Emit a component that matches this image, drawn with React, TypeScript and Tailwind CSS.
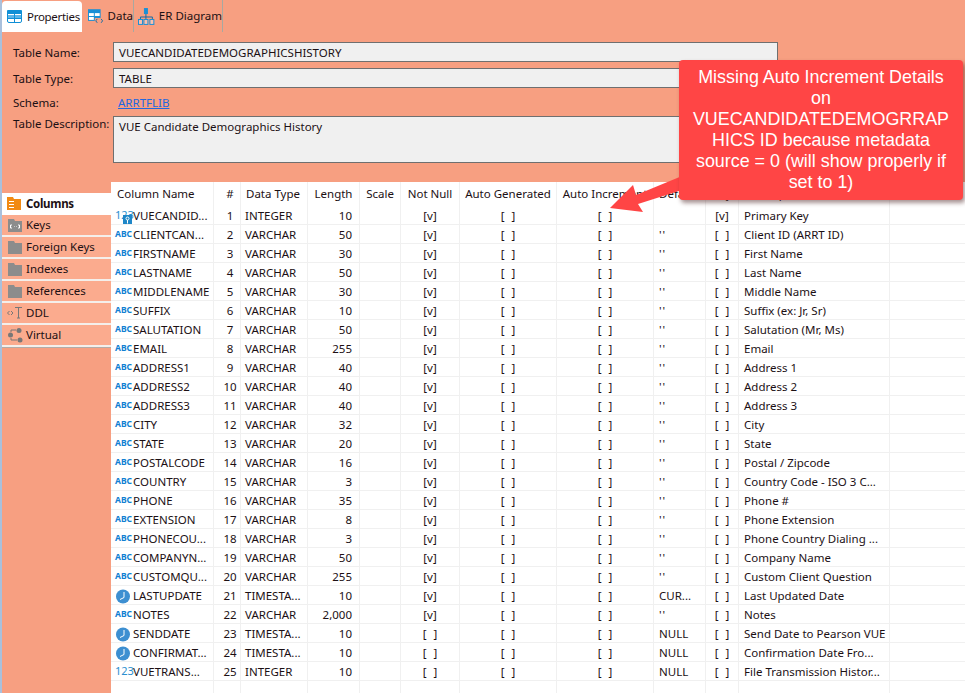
import React from "react";

const rows = [
  ["VUECANDID...", "1", "INTEGER", "10", "[v]", "", "[v]", "Primary Key", "pk"],
  ["CLIENTCAN...", "2", "VARCHAR", "50", "[v]", "''", "[ ]", "Client ID (ARRT ID)", "abc"],
  ["FIRSTNAME", "3", "VARCHAR", "30", "[v]", "''", "[ ]", "First Name", "abc"],
  ["LASTNAME", "4", "VARCHAR", "50", "[v]", "''", "[ ]", "Last Name", "abc"],
  ["MIDDLENAME", "5", "VARCHAR", "30", "[v]", "''", "[ ]", "Middle Name", "abc"],
  ["SUFFIX", "6", "VARCHAR", "10", "[v]", "''", "[ ]", "Suffix (ex: Jr, Sr)", "abc"],
  ["SALUTATION", "7", "VARCHAR", "50", "[v]", "''", "[ ]", "Salutation (Mr, Ms)", "abc"],
  ["EMAIL", "8", "VARCHAR", "255", "[v]", "''", "[ ]", "Email", "abc"],
  ["ADDRESS1", "9", "VARCHAR", "40", "[v]", "''", "[ ]", "Address 1", "abc"],
  ["ADDRESS2", "10", "VARCHAR", "40", "[v]", "''", "[ ]", "Address 2", "abc"],
  ["ADDRESS3", "11", "VARCHAR", "40", "[v]", "''", "[ ]", "Address 3", "abc"],
  ["CITY", "12", "VARCHAR", "32", "[v]", "''", "[ ]", "City", "abc"],
  ["STATE", "13", "VARCHAR", "20", "[v]", "''", "[ ]", "State", "abc"],
  ["POSTALCODE", "14", "VARCHAR", "16", "[v]", "''", "[ ]", "Postal / Zipcode", "abc"],
  ["COUNTRY", "15", "VARCHAR", "3", "[v]", "''", "[ ]", "Country Code - ISO 3 C...", "abc"],
  ["PHONE", "16", "VARCHAR", "35", "[v]", "''", "[ ]", "Phone #", "abc"],
  ["EXTENSION", "17", "VARCHAR", "8", "[v]", "''", "[ ]", "Phone Extension", "abc"],
  ["PHONECOU...", "18", "VARCHAR", "3", "[v]", "''", "[ ]", "Phone Country Dialing ...", "abc"],
  ["COMPANYN...", "19", "VARCHAR", "50", "[v]", "''", "[ ]", "Company Name", "abc"],
  ["CUSTOMQU...", "20", "VARCHAR", "255", "[v]", "''", "[ ]", "Custom Client Question", "abc"],
  ["LASTUPDATE", "21", "TIMESTA...", "10", "[v]", "CUR...", "[ ]", "Last Updated Date", "time"],
  ["NOTES", "22", "VARCHAR", "2,000", "[v]", "''", "[ ]", "Notes", "abc"],
  ["SENDDATE", "23", "TIMESTA...", "10", "[ ]", "NULL", "[ ]", "Send Date to Pearson VUE", "time"],
  ["CONFIRMAT...", "24", "TIMESTA...", "10", "[ ]", "NULL", "[ ]", "Confirmation Date Fro...", "time"],
  ["VUETRANS...", "25", "INTEGER", "10", "[ ]", "NULL", "[ ]", "File Transmission Histor...", "num"],
];

const gridCols =
  "grid grid-cols-[103px_27px_67px_52px_41px_59px_97px_97px_52px_33px_151px_1fr]";
const cell = "border-r border-b border-[#f0f0f0] px-[5px] whitespace-nowrap overflow-hidden";
const flag = `${cell} text-center [word-spacing:4px]`;

function ColIcon({ kind }: { kind: string }) {
  if (kind === "abc") {
    return <span className="w-[18px] shrink-0 text-[8.5px] leading-[10px] font-bold text-[#0f80d2] mb-[3px]">ABC</span>;
  }
  if (kind === "num" || kind === "pk") {
    return (
      <span className="relative w-[18px] shrink-0 text-[11px] leading-[11px] text-[#2b8fd0] mb-[3px]">
        123
        {kind === "pk" && (
          <svg width="9" height="10" viewBox="0 0 9 10" className="absolute left-[8px] top-[6px]">
            <rect width="9" height="10" fill="#1f87c8" />
            <circle cx="4.5" cy="3.5" r="1.5" fill="none" stroke="#fff" />
            <path d="M4.5 5V8.5" stroke="#fff" />
          </svg>
        )}
      </span>
    );
  }
  return (
    <svg width="18" height="15" viewBox="0 0 18 15" className="shrink-0">
      <circle cx="8" cy="7.5" r="7" fill="#3d8fd1" />
      <path d="M9 3V8.5L5 10.5" stroke="#fff" strokeWidth="1" fill="none" />
    </svg>
  );
}

function TabIcon({ kind }: { kind: string }) {
  if (kind === "props") {
    return (
      <svg width="15" height="13" viewBox="0 0 15 13">
        <rect x="0.5" y="0.5" width="14" height="12" rx="1.5" fill="#fff" stroke="#0f8fd6" />
        <rect x="0" y="0" width="15" height="4" rx="1" fill="#0f8fd6" />
        <rect x="1" y="5" width="6" height="3" fill="#5cb4e8" />
        <rect x="8" y="5" width="6" height="3" fill="#5cb4e8" />
        <path d="M7.5 4V12M0 8.5H15" stroke="#0f8fd6" />
      </svg>
    );
  }
  if (kind === "data") {
    return (
      <svg width="16" height="15" viewBox="0 0 16 15">
        <rect x="0" y="0" width="13" height="12" fill="#1a8fd6" />
        <rect x="1" y="4" width="5" height="3" fill="#fff" />
        <rect x="7" y="4" width="5" height="3" fill="#fff" />
        <rect x="1" y="8" width="5" height="3" fill="#fff" />
        <rect x="7" y="9" width="9" height="6" fill="#f79f81" />
        <path d="M9.5 10L8 12L9.5 14M13.5 10L15 12L13.5 14" stroke="#146ba6" fill="none" />
      </svg>
    );
  }
  return (
    <svg width="17" height="17" viewBox="0 0 17 17">
      <rect x="6.5" y="0.5" width="3" height="5" fill="#1a8fd6" stroke="#1a8fd6" />
      <path d="M8 6V9M2.5 11V9H14.5V11M8 9V11" stroke="#146ba6" fill="none" />
      <rect x="0.5" y="11.5" width="4" height="5" fill="#fff" fillOpacity="0.35" stroke="#1a8fd6" />
      <rect x="6" y="11.5" width="4" height="5" fill="#fff" fillOpacity="0.35" stroke="#1a8fd6" />
      <rect x="12" y="11.5" width="4" height="5" fill="#fff" fillOpacity="0.35" stroke="#1a8fd6" />
    </svg>
  );
}

function Folder({ kind }: { kind: string }) {
  if (kind === "columns") {
    return (
      <svg width="14" height="14" viewBox="0 0 14 14">
        <path d="M0 0H6L7 2H14V13H0Z" fill="#f28a13" />
        <path d="M2 4.5H7M2 7.5H7M2 10.5H7" stroke="#fff" />
      </svg>
    );
  }
  if (kind === "ddl") {
    return (
      <svg width="16" height="14" viewBox="0 0 16 14" fill="none" stroke="#777">
        <path d="M2.5 5L0.5 7L2.5 9M4 5L6 7L4 9" />
        <path d="M8 1.5H15M11.5 1.5V12M10 12H13" />
      </svg>
    );
  }
  if (kind === "virtual") {
    return (
      <svg width="15" height="15" viewBox="0 0 15 15">
        <circle cx="11" cy="2.5" r="2.5" fill="#777" />
        <circle cx="2.5" cy="7" r="2.5" fill="#777" />
        <circle cx="12" cy="12" r="2.5" fill="#777" />
        <path d="M3 4V2H8M3 10V12H9" stroke="#777" fill="none" />
      </svg>
    );
  }
  return (
    <svg width="14" height="13" viewBox="0 0 14 13">
      <path d="M0 0H6L7 2H14V13H0Z" fill="#8c8c8c" />
      {kind === "keys" && <path d="M4 6H2.5V9H4M10 6H11.5V9H10M6 7.5H6.5M8 7.5H8.5" stroke="#fff" fill="none" />}
    </svg>
  );
}

const sideTabs = [
  ["keys", "Keys"],
  ["folder", "Foreign Keys"],
  ["folder", "Indexes"],
  ["folder", "References"],
  ["ddl", "DDL"],
  ["virtual", "Virtual"],
];

const calloutLines = [
  "Missing Auto Increment Details",
  "on",
  "VUECANDIDATEDEMOGRRAP",
  "HICS ID because metadata",
  "source = 0 (will show properly if",
  "set to 1)",
];

export default function App() {
  return (
    <div
      className="relative w-[965px] h-[693px] overflow-hidden bg-[#f79f81] border-l-2 border-[#a9c0dc] text-[11.5px] text-[#1c1014]"
      style={{ fontFamily: '"Noto Sans", sans-serif' }}
    >
      {/* Editor tabs */}
      <div className="flex h-[32px] whitespace-nowrap">
        <div className="flex items-center gap-[5px] w-[80px] pl-[5px] mt-px bg-white rounded-t-sm">
          <TabIcon kind="props" />
          <span className="tracking-[-0.3px]">Properties</span>
        </div>
        <div className="flex items-center gap-[4px] w-[52px] pl-[6px] border-r border-[#a8a8a0]">
          <TabIcon kind="data" />
          <span>Data</span>
        </div>
        <div className="flex items-center gap-[4px] w-[89px] pl-[4px] border-r border-[#a8a8a0]">
          <TabIcon kind="er" />
          <span>ER Diagram</span>
        </div>
      </div>

      {/* Table properties */}
      <div className="flex flex-col h-[150px] pl-[11px] pt-[10px]">
        <div className="flex items-center h-[20px]">
          <span className="w-[100px] mt-[2px]">Table Name:</span>
          <div className="w-[665px] h-[20px] pl-[5px] border border-[#6f6f6f] bg-[#f0f0f0] leading-[20px]">VUECANDIDATEDEMOGRAPHICSHISTORY</div>
        </div>
        <div className="flex items-center h-[20px] mt-[6px]">
          <span className="w-[100px] mt-[2px]">Table Type:</span>
          <div className="w-[665px] h-[20px] pl-[5px] border border-[#6f6f6f] bg-[#f0f0f0] leading-[20px]">TABLE</div>
        </div>
        <div className="flex items-center h-[20px] mt-[4px]">
          <span className="w-[105px] mt-[2px]">Schema:</span>
          <span className="underline text-[#2168e0] mt-[2px]">ARRTFLIB</span>
        </div>
        <div className="flex mt-[4px]">
          <span className="w-[100px] -mt-px whitespace-nowrap">Table Description:</span>
          <div className="w-[665px] h-[47px] pl-[5px] border border-[#6f6f6f] bg-[#f0f0f0] leading-[20px]">VUE Candidate Demographics History</div>
        </div>
      </div>

      <div className="flex">
        {/* Side tabs */}
        <div className="flex flex-col w-[109px] pt-[11px]">
          <div className="flex items-center gap-[5px] h-[22px] pl-[5px] bg-white font-bold tracking-[-0.3px]">
            <Folder kind="columns" />
            <span>Columns</span>
          </div>
          {sideTabs.map(([kind, label]) => (
            <div
              key={label}
              className="flex items-center gap-[3px] h-[22px] pl-[5px] bg-[#fbab8e] border-b-2 border-[#f4efeb] shadow-[0_1px_0_#b4aca6]"
            >
              <span className="flex justify-center w-[16px]"><Folder kind={kind} /></span>
              <span>{label}</span>
            </div>
          ))}
        </div>

        {/* Columns grid */}
        <div className="flex-1 bg-white h-[511px]">
          <div className={`${gridCols} h-[24px] items-stretch leading-[24px] whitespace-nowrap`}>
            <div className="border-r border-[#f0f0f0] pl-[6px]">Column Name</div>
            <div className="border-r border-[#f0f0f0] text-center pl-[6px]">#</div>
            <div className="border-r border-[#f0f0f0] pl-[5px]">Data Type</div>
            <div className="border-r border-[#f0f0f0] text-center">Length</div>
            <div className="border-r border-[#f0f0f0] text-center">Scale</div>
            <div className="border-r border-[#f0f0f0] text-center">Not Null</div>
            <div className="border-r border-[#f0f0f0] text-center">Auto Generated</div>
            <div className="border-r border-[#f0f0f0] text-center">Auto Increment</div>
            <div className="border-r border-[#f0f0f0] pl-[5px]">Default</div>
            <div className="border-r border-[#f0f0f0] text-center">Key</div>
            <div className="border-r border-[#f0f0f0] pl-[6px]">Description</div>
            <div />
          </div>
          {rows.map((r) => (
            <div key={r[1]} className={`${gridCols} h-[19px] leading-[20px]`}>
              <div className={`${cell} flex items-center !pl-[4px] !pr-0 pt-[2px]`}>
                <ColIcon kind={r[8]} />
                <span>{r[0]}</span>
              </div>
              <div className={`${cell} text-center !pl-[6px] !pr-0`}>{r[1]}</div>
              <div className={`${cell} !pl-[4px]`}>{r[2]}</div>
              <div className={`${cell} text-right !pr-[7px]`}>{r[3]}</div>
              <div className={cell} />
              <div className={flag}>{r[4]}</div>
              <div className={flag}>[ ]</div>
              <div className={flag}>[ ]</div>
              <div className={`${cell} ${r[5] === "''" ? "tracking-[1px]" : ""}`}>{r[5]}</div>
              <div className={flag}>{r[6]}</div>
              <div className={cell}>{r[7]}</div>
              <div className="border-b border-[#f0f0f0]" />
            </div>
          ))}
          <div className={`${gridCols} h-[12px]`}>
            {Array.from({ length: 11 }).map((_, i) => (
              <div key={i} className="border-r border-[#f0f0f0]" />
            ))}
          </div>
        </div>
      </div>

      {/* Annotation */}
      <svg width="90" height="50" viewBox="0 0 90 50" className="absolute left-[606px] top-[170px]">
        <path d="M2 38 L25 15 L28 25 L74 6 L74 20 L30 34 L35 42 Z" fill="#ff4545" />
      </svg>
      <div
        className="absolute left-[677px] top-[60px] w-[284px] h-[140px] rounded-[4px] bg-[#ff4545] text-white text-center text-[17.9px] leading-[21px] pt-[7px] shadow-[2px_3px_4px_rgba(80,40,40,0.5)]"
        style={{ fontFamily: '"Liberation Sans", sans-serif' }}
      >
        {calloutLines.map((line) => (
          <div key={line}>{line}</div>
        ))}
      </div>
    </div>
  );
}
